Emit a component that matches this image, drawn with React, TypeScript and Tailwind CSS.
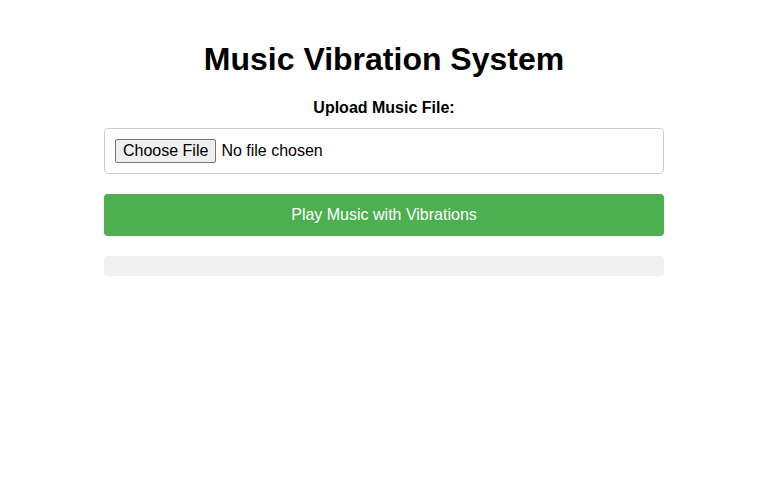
import React from 'react';

export default function App() {
  return (
    <div className="min-h-screen bg-white font-['Liberation_Sans',Arial,sans-serif] text-black">
      <div className="mx-auto w-[560px] pt-[41px]">
        <h1 className="text-center text-[32px] font-bold leading-[37px]">Music Vibration System</h1>

        <div className="mt-[21px]">
          <label htmlFor="music" className="block text-center text-[16px] font-bold leading-[18px]">
            Upload Music File:
          </label>
          <input
            id="music"
            type="file"
            accept="audio/*"
            className="mt-[11px] block w-full rounded-[4px] border border-[#cccccc] p-[10px] text-[16px] leading-[20px] file:mr-[5px] file:rounded-[2px] file:border file:border-solid file:border-[#767676] file:bg-[#efefef] file:px-[7px] file:py-[1px] file:text-[16px] file:leading-[20px] file:text-black"
          />
        </div>

        <button className="mt-[20px] block h-[42px] w-full rounded-[4px] bg-[#4caf50] text-[16px] text-white">
          Play Music with Vibrations
        </button>

        <div className="mt-[20px] h-[20px] w-full rounded-[4px] bg-[#f0f0f0]" />
      </div>
    </div>
  );
}
